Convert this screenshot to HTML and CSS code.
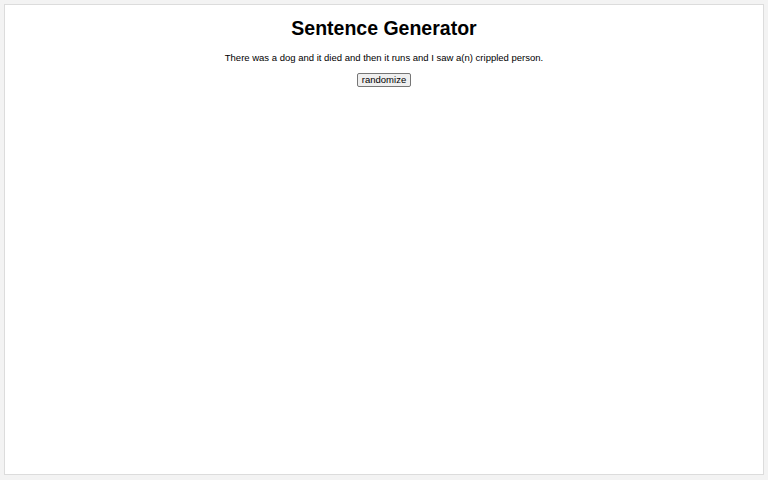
FILE: index.html
```html
<!DOCTYPE html>
<html lang="en">
<head>
    <meta charset="UTF-8">
    <meta name="viewport" content="width=device-width, initial-scale=1.0">
    <title>Sentence Generator</title>
    <link rel="stylesheet" href="styles.css">
</head>
<body>
    <div class="page">
        <h1>Sentence Generator</h1>
        <p class="sentence" id="sentence">There was a dog and it died and then it runs and I saw a(n) crippled person.</p>
        <button id="randomize">randomize</button>
    </div>

    <script>
        const subjects = ['dog', 'cat', 'man', 'bird', 'crippled person'];
        const verbs = ['died', 'ran', 'jumped', 'slept'];
        const actions = ['runs', 'walks', 'sings', 'cries'];
        const pick = (arr) => arr[Math.floor(Math.random() * arr.length)];

        document.getElementById('randomize').addEventListener('click', () => {
            document.getElementById('sentence').textContent =
                `There was a ${pick(subjects)} and it ${pick(verbs)} and then it ${pick(actions)} and I saw a(n) ${pick(subjects)}.`;
        });
    </script>
</body>
</html>
```

FILE: styles.css
```css
* {
    margin: 0;
    padding: 0;
    box-sizing: border-box;
}

html, body {
    height: 100%;
}

body {
    background: #f3f3f3;
    padding: 4px 4px 5px 4px;
    font-family: 'Liberation Sans', Arial, sans-serif;
    color: #000;
}

.page {
    height: 100%;
    background: #fff;
    border: 1px solid #dcdcdc;
    display: flex;
    flex-direction: column;
    align-items: center;
    padding-top: 12px;
}

h1 {
    font-size: 19.5px;
    font-weight: bold;
    margin-bottom: 12px;
}

.sentence {
    font-size: 9.5px;
    margin-bottom: 10px;
}

button {
    font-family: 'Liberation Sans', Arial, sans-serif;
    font-size: 9.5px;
    line-height: 12px;
    padding: 0 4px;
    background: #efefef;
    border: 1px solid #767676;
    border-radius: 2px;
    color: #000;
}
```
